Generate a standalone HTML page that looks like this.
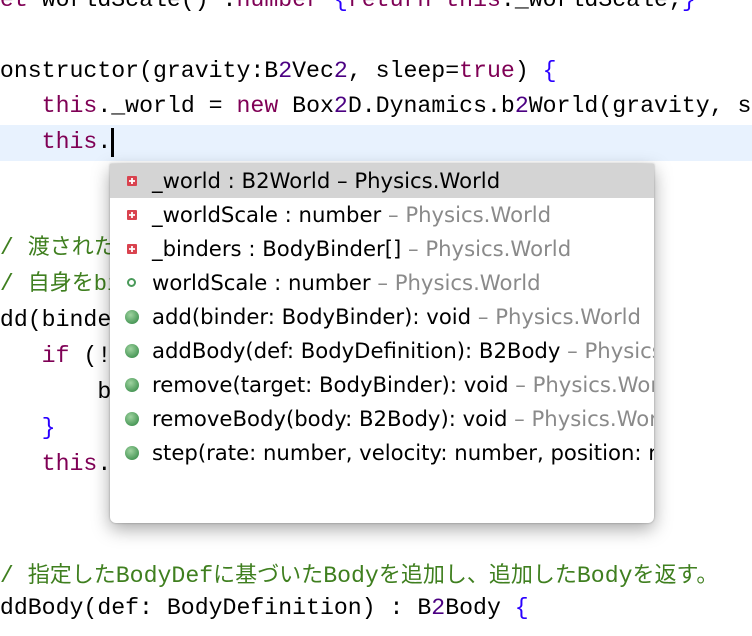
<!DOCTYPE html>
<html><head><meta charset="utf-8"><style>
html,body{margin:0;width:752px;height:636px;overflow:hidden}
body{background:#fff;position:relative;font-family:"Liberation Mono","Noto Sans CJK JP",monospace;}
.l{position:absolute;left:-14px;white-space:pre;font-size:23.2px;line-height:36px;height:36px;color:#000;}
.k{color:#7f0055}.c{color:#3f7f1f;font-family:"Liberation Mono","Noto Sans CJK JP",monospace}.b{color:#2a00ff}.n{color:#4b0082}
.cj{font-size:22px}
.hl{position:absolute;left:0;top:125px;width:752px;height:36px;background:#e8f2fe}
.cur{position:absolute;left:111px;top:128px;width:3px;height:29px;background:#000}
.pop{position:absolute;left:110px;top:164px;width:544px;height:359px;background:#fff;border-radius:0 0 6px 6px;box-shadow:0 6px 18px rgba(0,0,0,.35),0 0 2px rgba(0,0,0,.3);overflow:hidden;font-family:"DejaVu Sans","Liberation Sans",sans-serif;font-size:21.2px}
.r{position:relative;height:34px;line-height:34px;white-space:nowrap;padding-left:42px}
.r.s{background:#d4d4d4}
.g{color:#8a8a8a}
.ip{position:absolute;left:17px;top:12px;width:10px;height:10px;background:#d9434f;border-radius:1px}
.ip:after{content:"";position:absolute;left:2px;top:2px;width:6px;height:6px;background:#fff;clip-path:polygon(35% 0,65% 0,65% 35%,100% 35%,100% 65%,65% 65%,65% 100%,35% 100%,35% 65%,0 65%,0 35%,35% 35%)}
.io{position:absolute;left:17px;top:12px;width:5px;height:5px;border:2.5px solid #4a9a5a;border-radius:50%}
.im{position:absolute;left:15px;top:10px;width:14px;height:14px;border-radius:50%;background:radial-gradient(circle at 40% 35%,#9fd3a0,#4c9a5a 70%,#3a7f48)}
</style></head><body>
<div class="hl"></div>
<div class="l" style="top:-18px"><span class="k">get</span> worldScale() :<span class="k">number</span> <span class="b">{</span><span class="k">return</span> <span class="k">this</span>._worldScale;<span class="b">}</span></div>
<div class="l" style="top:53px">constructor(gravity:B<span class="n">2</span>Vec<span class="n">2</span>, sleep=<span class="k">true</span>) <span class="b">{</span></div>
<div class="l" style="top:88px">    <span class="k">this</span>._world = <span class="k">new</span> Box<span class="n">2</span>D.Dynamics.b<span class="n">2</span>World(gravity, s</div>
<div class="l" style="top:124px">    <span class="k">this</span>.</div>
<div class="cur"></div>
<div class="l c" style="top:230px">// <span class="cj">渡されたBodyBinderがまだ登録されていない場合、</span></div>
<div class="l c" style="top:266px">// <span class="cj">自身をbinderに登録</span></div>
<div class="l" style="top:302px">add(binder: BodyBinder) : <span class="k">void</span> <span class="b">{</span></div>
<div class="l" style="top:338px">    <span class="k">if</span> (!binder) {</div>
<div class="l" style="top:374px">        binder</div>
<div class="l" style="top:410px">    <span class="b">}</span></div>
<div class="l" style="top:446px">    <span class="k">this</span>.</div>
<div class="l c" style="top:558px">// <span class="cj">指定した</span>BodyDef<span class="cj">に基づいた</span>Body<span class="cj">を追加し、追加した</span>Body<span class="cj">を返す。</span></div>
<div class="l" style="top:590px">addBody(def: BodyDefinition) : B<span class="n">2</span>Body <span class="b">{</span></div>
<div class="pop">
<div class="r s"><i class="ip"></i>_world : B2World – Physics.World</div>
<div class="r"><i class="ip"></i>_worldScale : number <span class="g">– Physics.World</span></div>
<div class="r"><i class="ip"></i>_binders : BodyBinder[] <span class="g">– Physics.World</span></div>
<div class="r"><i class="io"></i>worldScale : number <span class="g">– Physics.World</span></div>
<div class="r"><i class="im"></i>add(binder: BodyBinder): void <span class="g">– Physics.World</span></div>
<div class="r"><i class="im"></i>addBody(def: BodyDefinition): B2Body <span class="g">– Physics.World</span></div>
<div class="r"><i class="im"></i>remove(target: BodyBinder): void <span class="g">– Physics.World</span></div>
<div class="r"><i class="im"></i>removeBody(body: B2Body): void <span class="g">– Physics.World</span></div>
<div class="r"><i class="im"></i>step(rate: number, velocity: number, position: number): void</div>
</div>
</body></html>
